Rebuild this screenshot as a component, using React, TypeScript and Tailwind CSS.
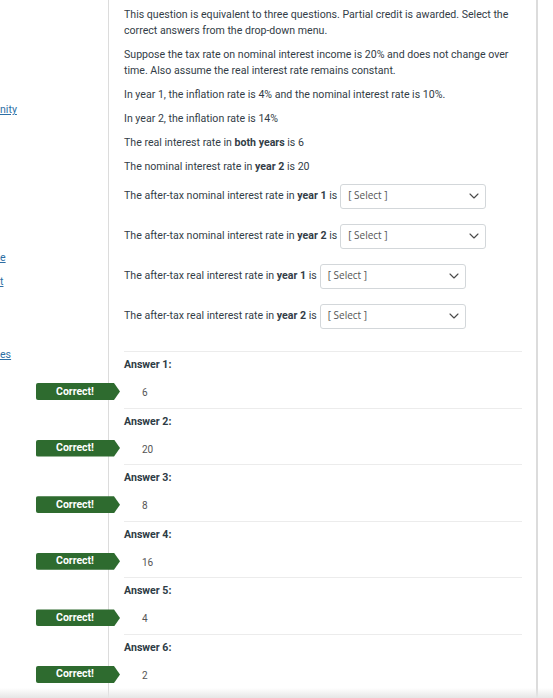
import React from "react";

const font = { fontFamily: "Roboto, 'Noto Sans', sans-serif" };

function Chevron() {
  return (
    <svg width="10" height="6" viewBox="0 0 10 6" fill="none" className="mr-[6px]">
      <path d="M1 1l4 4 4-4" stroke="#4a4a4a" strokeWidth="1.1" strokeLinecap="round" strokeLinejoin="round" />
    </svg>
  );
}

function Select() {
  return (
    <div className="ml-[3px] flex h-[25px] w-[146px] items-center justify-between rounded-[3px] border border-[#d3d7da] bg-white pl-[7px]">
      <span className="-mt-[3px] text-[10px] text-[#555]" style={{ fontFamily: "'Open Sans', 'Noto Sans', sans-serif" }}>
        [ Select ]
      </span>
      <Chevron />
    </div>
  );
}

function SelectRow({ pre, bold }: { pre: string; bold: string }) {
  return (
    <div className="flex h-[40px] items-center">
      <span>
        {pre} <b className="font-bold">{bold}</b> is
      </span>
      <Select />
    </div>
  );
}

function Badge() {
  return (
    <div className="absolute left-[-88px] top-[31px] z-10 flex h-[17px] w-[84px] items-center rounded-l-[2px] bg-[#2e6b2f] [clip-path:polygon(0_0,calc(100%-6px)_0,100%_50%,calc(100%-6px)_100%,0_100%)]">
      <span className="w-[78px] text-center text-[10.5px] font-bold text-white">Correct!</span>
    </div>
  );
}

function AnswerRow({ n, value }: { n: number; value: string }) {
  return (
    <div className="relative h-[56.6px] border-t border-[#ececec]">
      <Badge />
      <div className="mt-[5px] h-[16px] text-[10.6px] font-bold leading-[16px] text-[#2d3b45]">Answer {n}:</div>
      <div className="ml-[18px] mt-[12px] text-[10px] leading-[16px] text-[#555]">{value}</div>
    </div>
  );
}

export default function App() {
  return (
    <div className="relative flex h-[698px] w-[553px] overflow-hidden bg-white" style={font}>
      <div className="w-[108px] shrink-0 text-[10.6px] leading-[16px] text-[#2d6fa5]">
        <div className="pt-[102px] underline">nity</div>
        <div className="mt-[132px] underline">e</div>
        <div className="mt-[8px] underline">t</div>
        <div className="mt-[57px] underline">es</div>
      </div>
      <div className="w-[430px] shrink-0 border-l-[1.5px] border-r-2 border-[#dcdcdc] pl-[15px] pr-[14px] pt-[7px] text-[10.6px] leading-[16px] text-[#333d47]">
        <p className="mb-2">
          This question is equivalent to three questions. Partial credit is awarded. Select the correct answers from the drop-down menu.
        </p>
        <p className="mb-2">
          Suppose the tax rate on nominal interest income is 20% and does not change over time. Also assume the real interest rate remains constant.
        </p>
        <p className="mb-2">In year 1, the inflation rate is 4% and the nominal interest rate is 10%.</p>
        <p className="mb-2">In year 2, the inflation rate is 14%</p>
        <p className="mb-2">
          The real interest rate in <b className="font-bold">both years</b> is 6
        </p>
        <p>
          The nominal interest rate in <b className="font-bold">year 2</b> is 20
        </p>
        <div className="mt-[1px]">
          <SelectRow pre="The after-tax nominal interest rate in" bold="year 1" />
          <SelectRow pre="The after-tax nominal interest rate in" bold="year 2" />
          <SelectRow pre="The after-tax real interest rate in" bold="year 1" />
          <SelectRow pre="The after-tax real interest rate in" bold="year 2" />
        </div>
        <div className="h-[15px]" />
        <AnswerRow n={1} value="6" />
        <AnswerRow n={2} value="20" />
        <AnswerRow n={3} value="8" />
        <AnswerRow n={4} value="16" />
        <AnswerRow n={5} value="4" />
        <AnswerRow n={6} value="2" />
      </div>
      <div className="pointer-events-none absolute bottom-0 left-0 h-[10px] w-full bg-gradient-to-b from-transparent to-[#e6e6e6]" />
    </div>
  );
}
